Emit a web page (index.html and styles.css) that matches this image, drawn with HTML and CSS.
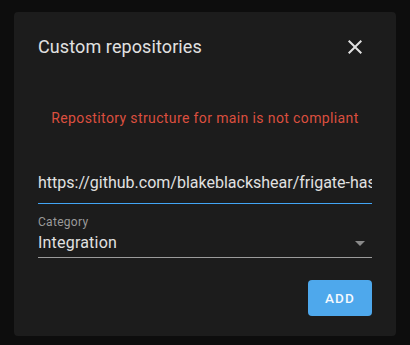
FILE: index.html
```html
<!DOCTYPE html>
<html>
<head>
<meta charset="utf-8">
<link rel="stylesheet" href="styles.css">
</head>
<body>
<div class="dialog">
  <div class="header">
    <div class="title">Custom repositories</div>
    <svg class="close" width="24" height="24" viewBox="0 0 24 24"><path d="M19,6.41L17.59,5L12,10.59L6.41,5L5,6.41L10.59,12L5,17.59L6.41,19L12,13.41L17.59,19L19,17.59L13.41,12L19,6.41Z" fill="#e1e1e1"/></svg>
  </div>
  <div class="error">Repostitory structure for main is not compliant</div>
  <div class="field repo">
    <div class="value">https://github.com/blakeblackshear/frigate-hass-integration</div>
  </div>
  <div class="field select">
    <div class="label">Category</div>
    <div class="row">
      <div class="value">Integration</div>
      <svg class="arrow" width="10" height="5" viewBox="0 0 10 5"><path d="M0 0L10 0L5 5Z" fill="#8a8a8a"/></svg>
    </div>
  </div>
  <div class="actions">
    <button class="add">ADD</button>
  </div>
</div>
</body>
</html>
```
FILE: styles.css
```css
html, body { margin: 0; padding: 0; }
body {
  background: #0d0d0d;
  font-family: Roboto, "Noto Sans", sans-serif;
  width: 410px;
  height: 345px;
  overflow: hidden;
}
.dialog {
  margin: 12px 14px;
  width: 382px;
  height: 324px;
  box-sizing: border-box;
  background: #1c1c1c;
  border-radius: 4px;
  padding: 23px 24px 0 24px;
}
.header {
  display: flex;
  align-items: center;
  justify-content: space-between;
}
.title {
  color: #e1e1e1;
  font-size: 18px;
  line-height: 24px;
  font-weight: 400;
  letter-spacing: 0.1px;
}
.close { margin-right: 5px; }
.error {
  margin-top: 49px;
  color: #db4f3f;
  font-size: 14px;
  line-height: 20px;
  text-align: center;
  letter-spacing: 0.38px;
}
.field { width: 334px; }
.repo {
  margin-top: 43px;
  border-bottom: 1px solid #42a5f5;
  height: 32px;
  overflow: hidden;
}
.repo .value {
  color: #e1e1e1;
  font-size: 16px;
  line-height: 24px;
  white-space: nowrap;
  overflow: hidden;
}
.select {
  margin-top: 10px;
  border-bottom: 1px solid #9b9b9b;
}
.label {
  color: #9a9a9a;
  font-size: 12px;
  line-height: 16px;
  letter-spacing: 0.3px;
}
.row {
  display: flex;
  align-items: center;
  justify-content: space-between;
  height: 27px;
  padding-bottom: 1px;
  box-sizing: border-box;
}
.select .value {
  color: #e1e1e1;
  font-size: 16px;
  line-height: 24px;
  letter-spacing: 0.2px;
}
.arrow { margin-right: 7px; }
.actions {
  display: flex;
  justify-content: flex-end;
  width: 334px;
  margin-top: 22px;
}
.add {
  width: 64px;
  height: 36px;
  background: #4ea8ec;
  border: none;
  border-radius: 4px;
  color: #f4f9fe;
  font-family: Roboto, sans-serif;
  font-size: 13.5px;
  font-weight: 500;
  letter-spacing: 1.2px;
  padding: 0;
}
```
